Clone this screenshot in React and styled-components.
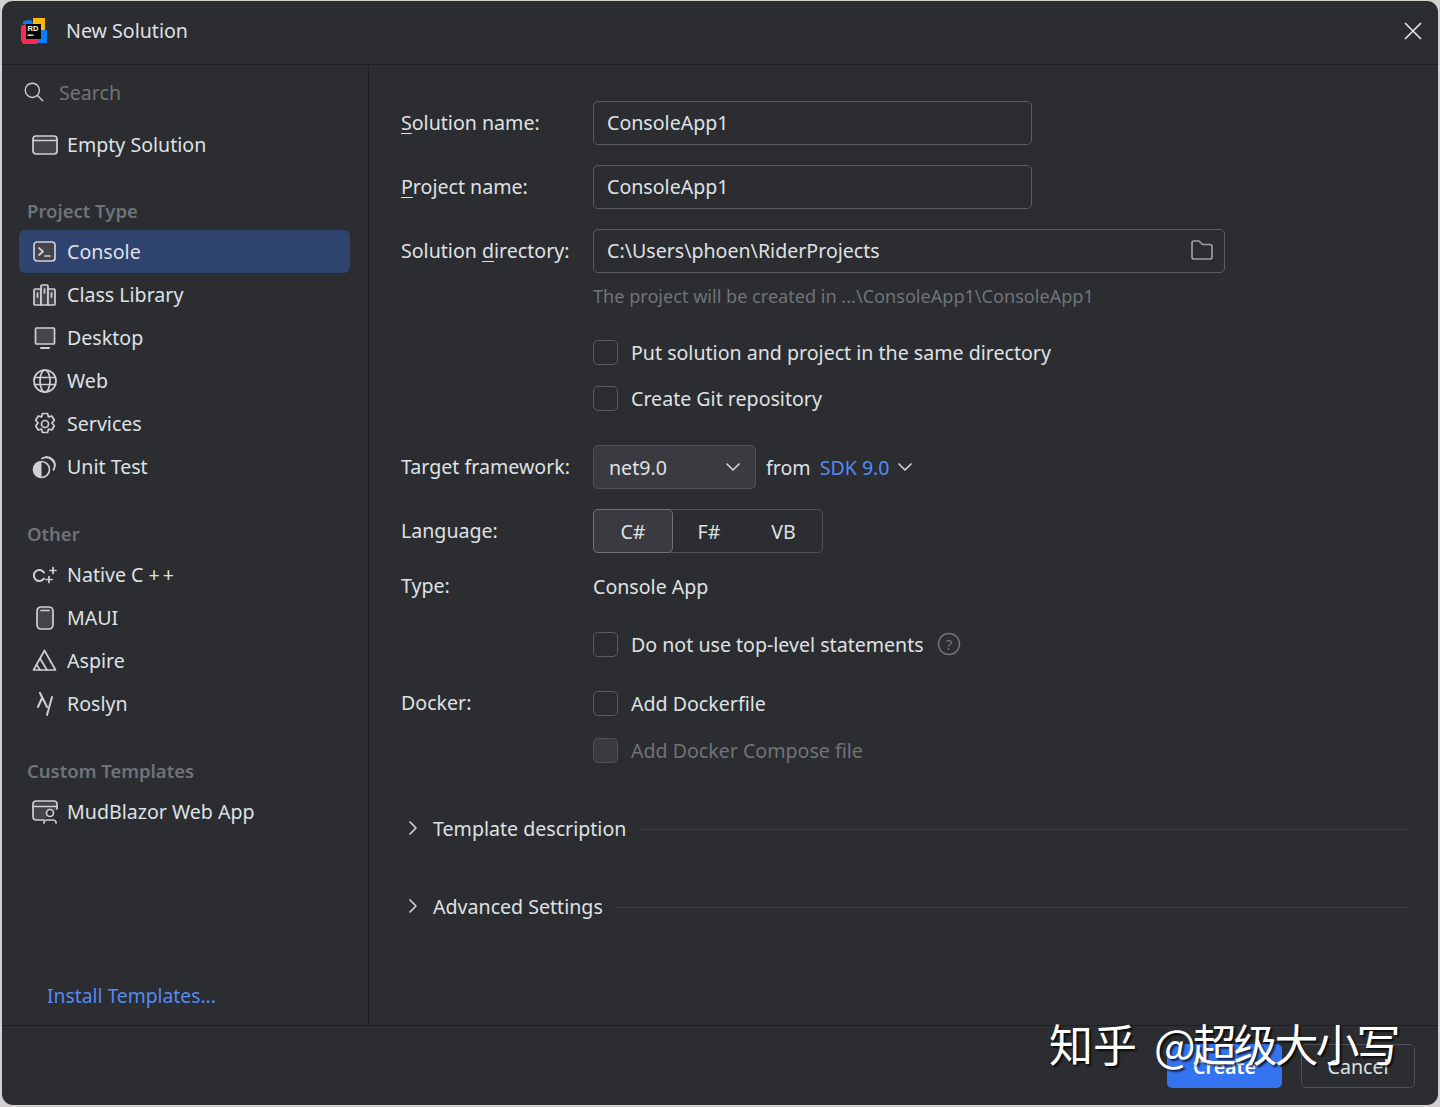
import React from 'react';
import styled, { createGlobalStyle } from 'styled-components';

const GlobalStyle = createGlobalStyle`
  html, body {
    margin: 0;
    padding: 0;
    background: #d3d0ce;
  }
  #root {
    width: 1440px;
    height: 1107px;
    overflow: hidden;
  }
`;

const Page = styled.div`
  width: 1440px;
  height: 1107px;
  padding: 1px 2px 2px 2px;
  box-sizing: border-box;
  font-family: "Noto Sans", "Open Sans", sans-serif;
  font-size: 19.6px;
  color: #dfe1e5;
`;

const Dialog = styled.div`
  position: relative;
  width: 100%;
  height: 100%;
  background: #2b2d30;
  border-radius: 11px;
  display: flex;
  flex-direction: column;
  overflow: hidden;
`;

const TitleBar = styled.div`
  height: 64px;
  flex: none;
  display: flex;
  align-items: center;
  padding: 0 15px 4px 19px;
  box-sizing: border-box;
  border-bottom: 1px solid #1e1f22;
`;

const AppTitle = styled.div`
  margin-left: 19px;
  flex: 1;
  line-height: 28px;
`;

const Body = styled.div`
  flex: 1;
  display: flex;
  min-height: 0;
`;

const Sidebar = styled.div`
  width: 367px;
  flex: none;
  border-right: 1px solid #1e1f22;
  display: flex;
  flex-direction: column;
  padding: 13px 18px 15px 17px;
  box-sizing: border-box;
`;

const SearchRow = styled.div`
  height: 28px;
  display: flex;
  align-items: center;
  gap: 15px;
  padding-left: 5px;
  margin-bottom: 17px;
  color: #6f737a;
`;

const NavItem = styled.div`
  height: 43px;
  display: flex;
  align-items: center;
  gap: 9px;
  padding-left: 13px;
  border-radius: 6px;
  background: ${({ $active }) => ($active ? '#2e436e' : 'transparent')};
`;

const SpacedPlus = styled.span`
  margin-left: 5px;
  letter-spacing: 3px;
`;

const GroupTitle = styled.div`
  height: 24px;
  line-height: 24px;
  padding-left: 8px;
  margin: ${({ $top }) => $top}px 0 7px;
  font-size: 18.5px;
  font-weight: 600;
  color: #6f737a;
`;

const InstallLink = styled.div`
  margin-top: auto;
  padding-left: 28px;
  color: #548af7;
  line-height: 28px;
  font-size: 19.3px;
`;

const Main = styled.div`
  flex: 1;
  padding: 36px 30px 0 32px;
  box-sizing: border-box;
`;

const Row = styled.div`
  display: flex;
  align-items: center;
  height: ${({ $h }) => $h}px;
  margin-top: ${({ $top }) => $top || 0}px;
`;

const Label = styled.div`
  width: 192px;
  flex: none;
  padding-bottom: 2px;
`;

const Mnemonic = styled.span`
  text-decoration: underline;
  text-underline-offset: 3px;
  text-decoration-thickness: 1px;
`;

const TextBox = styled.div`
  width: ${({ $w }) => $w}px;
  height: 44px;
  box-sizing: border-box;
  border: 1px solid #5a5d63;
  border-radius: 5px;
  padding: 0 11px 2px 13px;
  display: flex;
  align-items: center;
  justify-content: space-between;
`;

const Hint = styled.div`
  margin-left: 192px;
  color: #6f737a;
  font-size: 18.1px;
`;

const CheckLine = styled.div`
  display: flex;
  align-items: center;
  gap: 13px;
  margin-left: ${({ $indent }) => ($indent ? 192 : 0)}px;
  color: ${({ $disabled }) => ($disabled ? '#6f737a' : '#dfe1e5')};
`;

const CheckBox = styled.span`
  width: 25px;
  height: 25px;
  box-sizing: border-box;
  border-radius: 5px;
  border: 1.5px solid ${({ $disabled }) => ($disabled ? '#4e5157' : '#5a5d63')};
  background: ${({ $disabled }) => ($disabled ? '#393b40' : 'transparent')};
  flex: none;
`;

const Select = styled.div`
  width: 163px;
  height: 44px;
  box-sizing: border-box;
  background: #393b40;
  border: 1px solid #4e5157;
  border-radius: 5px;
  padding: 0 14px 0 15px;
  display: flex;
  align-items: center;
  justify-content: space-between;
`;

const FromText = styled.span`
  margin-left: 10px;
`;

const SdkLink = styled.span`
  margin-left: 9px;
  margin-right: 7px;
  color: #548af7;
`;

const Segments = styled.div`
  width: 230px;
  height: 44px;
  box-sizing: border-box;
  border: 1px solid #4e5157;
  border-radius: 5px;
  display: flex;
  align-items: center;
`;

const Segment = styled.div`
  width: ${({ $w }) => $w}px;
  height: ${({ $on }) => ($on ? '44px' : 'auto')};
  margin: ${({ $on }) => ($on ? '0 0 0 -1px' : '0')};
  box-sizing: border-box;
  display: flex;
  align-items: center;
  justify-content: center;
  border-radius: 5px;
  background: ${({ $on }) => ($on ? '#393b40' : 'transparent')};
  border: ${({ $on }) => ($on ? '1.5px solid #6f737a' : 'none')};
`;

const Collapsible = styled.div`
  display: flex;
  align-items: center;
  height: 24px;
  margin-top: ${({ $top }) => $top}px;
  padding-left: 4px;
`;

const CollapsibleTitle = styled.span`
  margin: 0 11px 0 12px;
  white-space: nowrap;
`;

const Rule = styled.div`
  flex: 1;
  height: 1px;
  margin-top: 3px;
  background: #393b40;
`;

const Footer = styled.div`
  height: 80px;
  flex: none;
  border-top: 1px solid #1e1f22;
  display: flex;
  justify-content: flex-end;
  align-items: flex-start;
  gap: 19px;
  padding: 18px 23px 0 0;
  box-sizing: border-box;
`;

const PrimaryButton = styled.div`
  width: 115px;
  height: 44px;
  box-sizing: border-box;
  background: #3574f0;
  border-radius: 5px;
  color: #fff;
  font-weight: 600;
  display: flex;
  align-items: center;
  justify-content: center;
`;

const GhostButton = styled(PrimaryButton)`
  width: 114px;
  background: transparent;
  border: 1px solid #4e5157;
  color: #dfe1e5;
  font-weight: 400;
`;

const Watermark = styled.div`
  position: absolute;
  left: 1049px;
  top: 1014px;
  font-family: "Noto Sans CJK SC", sans-serif;
  font-size: 44px;
  line-height: 58px;
  color: #fff;
  white-space: pre;
  text-shadow: 2px 2px 2px rgba(0, 0, 0, 0.75);
`;

const WatermarkHandle = styled.span`
  margin-left: 17px;
  letter-spacing: -3px;
`;

const Icon = styled.svg`
  width: ${({ $s }) => $s || 26}px;
  height: ${({ $s }) => $s || 26}px;
  flex: none;
  fill: none;
  stroke: ${({ $c }) => $c || '#ced0d6'};
  stroke-width: 1.7;
  stroke-linecap: round;
  stroke-linejoin: round;
`;

const Glyph = ({ children, s, c, vb = 26 }) => (
  <Icon viewBox={`0 0 ${vb} ${vb}`} $s={s} $c={c}>{children}</Icon>
);

const RiderLogo = () => (
  <svg width="26" height="26" viewBox="0 0 26 26" style={{ flex: 'none' }}>
    <path d="M12 0h12v14h-4V6h-8z" fill="#fdb60d" />
    <path d="M2 6V3l8-1 2 4z" fill="#087cfa" />
    <path d="M20 12h6v13H15v-4h5z" fill="#087cfa" />
    <path d="M0 8l5-2v15h13l-2 5H2l-2-4z" fill="#fe2857" />
    <rect x="5" y="6" width="15" height="15" fill="#000" />
    <text x="6.500" y="13" fontFamily="Liberation Sans, sans-serif" fontWeight="700" fontSize="7.500" fill="#fff">RD</text>
    <rect x="6.500" y="16.500" width="6" height="1.300" fill="#fff" />
  </svg>
);

const Icons = {
  empty: (
    <Glyph>
      <rect x="1" y="4" width="24" height="18" rx="3" fill="#43454a" />
      <path d="M1 8.500h24" />
    </Glyph>
  ),
  console: (
    <Glyph>
      <rect x="2" y="3" width="21" height="19" rx="3" fill="#43454a" />
      <path d="M7 9l4 3.500L7 16M13 17h5" />
    </Glyph>
  ),
  library: (
    <Glyph>
      <path d="M3 7h6v16H3a1 1 0 0 1-1-1V8a1 1 0 0 1 1-1z" fill="#43454a" />
      <path d="M9 4a1 1 0 0 1 1-1h5a1 1 0 0 1 1 1v19H9z" fill="#43454a" />
      <path d="M16 7h6a1 1 0 0 1 1 1v14a1 1 0 0 1-1 1h-6z" fill="#43454a" />
      <path d="M5.500 11v4M12.500 7v4M19.500 11v4" />
    </Glyph>
  ),
  desktop: (
    <Glyph>
      <rect x="3.500" y="3" width="19" height="16" rx="1" fill="#43454a" />
      <path d="M9 23h8" strokeWidth="2" />
    </Glyph>
  ),
  web: (
    <Glyph>
      <circle cx="13" cy="13" r="11" />
      <ellipse cx="13" cy="13" rx="5" ry="11" />
      <path d="M2.500 9.500h21M2.500 16.500h21" />
    </Glyph>
  ),
  services: (
    <Glyph>
      <path d="M10.500 2.500h5l1 3.400 3.300-.9 2.500 4.300-2.400 2.700 2.400 2.700-2.500 4.300-3.300-.9-1 3.400h-5l-1-3.400-3.300.9-2.500-4.300 2.400-2.700-2.400-2.700 2.500-4.300 3.300.9z" />
      <circle cx="13" cy="13" r="3.500" />
    </Glyph>
  ),
  test: (
    <Glyph>
      <circle cx="9.500" cy="15.500" r="8" />
      <path d="M9.500 7.500a8 8 0 0 0 0 16z" fill="#ced0d6" stroke="none" />
      <path d="M10 4.500a8.500 8.500 0 0 1 11.500 11.500M13.500 3a8.500 8.500 0 0 1 9.500 9" />
    </Glyph>
  ),
  cpp: (
    <Glyph>
      <path d="M12 10.500a5.500 5.500 0 1 0 0 6" strokeWidth="2" />
      <path d="M14 17.500h6M17 14.500v6M18 8.500h6M21 5.500v6" />
    </Glyph>
  ),
  maui: (
    <Glyph>
      <rect x="5" y="2" width="16" height="22" rx="4" fill="#43454a" />
      <path d="M9 5.500h8" />
    </Glyph>
  ),
  aspire: (
    <Glyph>
      <path d="M12.500 2.500l11 19.500h-22z" />
      <path d="M8 10.500L15 22M4.500 16.500L8 22" />
    </Glyph>
  ),
  roslyn: (
    <Glyph>
      <path d="M8 2l7 14M6 16l4-9M15 24l5-18" strokeWidth="2" />
    </Glyph>
  ),
  mud: (
    <Glyph>
      <path d="M12 21H4a3 3 0 0 1-3-3V5a3 3 0 0 1 3-3h18a3 3 0 0 1 3 3v5" fill="#43454a" />
      <path d="M1 7.500h24" />
      <circle cx="18" cy="14" r="3.500" fill="#2b2d30" />
      <path d="M12 24v-1a3 3 0 0 1 3-2h6a3 3 0 0 1 3 2v1" />
    </Glyph>
  ),
};

const Search = () => (
  <Glyph s={20} vb={24}>
    <circle cx="10" cy="10" r="8.500" />
    <path d="M16.500 16.500l6 6" />
  </Glyph>
);

const Close = () => (
  <Glyph s={20} vb={20} c="#dfe1e5">
    <path d="M2.500 2.500l15 15M17.500 2.500l-15 15" />
  </Glyph>
);

const Folder = () => (
  <Glyph s={22} vb={22} c="#9a9da3">
    <path d="M1 4a2 2 0 0 1 2-2h5l3.500 3.500H19a2 2 0 0 1 2 2V18a2 2 0 0 1-2 2H3a2 2 0 0 1-2-2z" />
  </Glyph>
);

const ChevronDown = () => (
  <Glyph s={16} vb={16}>
    <path d="M2 5l6 6 6-6" />
  </Glyph>
);

const ChevronRight = () => (
  <Glyph s={16} vb={16}>
    <path d="M5 2l6 6-6 6" />
  </Glyph>
);

const Help = () => (
  <svg width="24" height="24" viewBox="0 0 24 24" style={{ flex: 'none' }}>
    <circle cx="12" cy="12" r="10.500" fill="none" stroke="#6f737a" strokeWidth="1.500" />
    <text x="12" y="17.500" textAnchor="middle" fontFamily="Noto Sans, sans-serif" fontSize="15" fill="#6f737a">?</text>
  </svg>
);

const projectTypes = [
  ['Console', 'console'],
  ['Class Library', 'library'],
  ['Desktop', 'desktop'],
  ['Web', 'web'],
  ['Services', 'services'],
  ['Unit Test', 'test'],
];

const otherTypes = [
  [<span>Native C<SpacedPlus>++</SpacedPlus></span>, 'cpp'],
  ['MAUI', 'maui'],
  ['Aspire', 'aspire'],
  ['Roslyn', 'roslyn'],
];

const App = () => {
  return (
    <Page>
      <GlobalStyle />
      <Dialog>
        <TitleBar>
          <RiderLogo />
          <AppTitle>New Solution</AppTitle>
          <Close />
        </TitleBar>
        <Body>
          <Sidebar>
            <SearchRow><Search />Search</SearchRow>
            <NavItem>{Icons.empty}Empty Solution</NavItem>
            <GroupTitle $top={33}>Project Type</GroupTitle>
            {projectTypes.map(([name, icon]) => (
              <NavItem key={icon} $active={name === 'Console'}>{Icons[icon]}{name}</NavItem>
            ))}
            <GroupTitle $top={34}>Other</GroupTitle>
            {otherTypes.map(([name, icon]) => (
              <NavItem key={icon}>{Icons[icon]}{name}</NavItem>
            ))}
            <GroupTitle $top={34}>Custom Templates</GroupTitle>
            <NavItem>{Icons.mud}MudBlazor Web App</NavItem>
            <InstallLink>Install Templates...</InstallLink>
          </Sidebar>
          <Main>
            <Row $h={44}>
              <Label><Mnemonic>S</Mnemonic>olution name:</Label>
              <TextBox $w={439}>ConsoleApp1</TextBox>
            </Row>
            <Row $h={44} $top={20}>
              <Label><Mnemonic>P</Mnemonic>roject name:</Label>
              <TextBox $w={439}>ConsoleApp1</TextBox>
            </Row>
            <Row $h={44} $top={20}>
              <Label>Solution <Mnemonic>d</Mnemonic>irectory:</Label>
              <TextBox $w={632}>C:\Users\phoen\RiderProjects<Folder /></TextBox>
            </Row>
            <Row $h={24} $top={11}>
              <Hint>The project will be created in ...\ConsoleApp1\ConsoleApp1</Hint>
            </Row>
            <Row $h={26} $top={31}>
              <CheckLine $indent><CheckBox />Put solution and project in the same directory</CheckLine>
            </Row>
            <Row $h={26} $top={20}>
              <CheckLine $indent><CheckBox />Create Git repository</CheckLine>
            </Row>
            <Row $h={44} $top={34}>
              <Label>Target framework:</Label>
              <Select>net9.0<ChevronDown /></Select>
              <FromText>from</FromText>
              <SdkLink>SDK 9.0</SdkLink>
              <ChevronDown />
            </Row>
            <Row $h={44} $top={20}>
              <Label>Language:</Label>
              <Segments>
                <Segment $on $w={80}>C#</Segment>
                <Segment $w={72}>F#</Segment>
                <Segment $w={77}>VB</Segment>
              </Segments>
            </Row>
            <Row $h={24} $top={21}>
              <Label>Type:</Label>
              <span>Console App</span>
            </Row>
            <Row $h={26} $top={33}>
              <CheckLine $indent><CheckBox />Do not use top-level statements<Help /></CheckLine>
            </Row>
            <Row $h={26} $top={33}>
              <Label>Docker:</Label>
              <CheckLine><CheckBox />Add Dockerfile</CheckLine>
            </Row>
            <Row $h={26} $top={21}>
              <CheckLine $indent $disabled><CheckBox $disabled />Add Docker Compose file</CheckLine>
            </Row>
            <Collapsible $top={53}><ChevronRight /><CollapsibleTitle>Template description</CollapsibleTitle><Rule /></Collapsible>
            <Collapsible $top={54}><ChevronRight /><CollapsibleTitle>Advanced Settings</CollapsibleTitle><Rule /></Collapsible>
          </Main>
        </Body>
        <Footer>
          <PrimaryButton>Create</PrimaryButton>
          <GhostButton>Cancel</GhostButton>
        </Footer>
      </Dialog>
      <Watermark>知乎<WatermarkHandle>@超级大小写</WatermarkHandle></Watermark>
    </Page>
  );
};

export default App;
